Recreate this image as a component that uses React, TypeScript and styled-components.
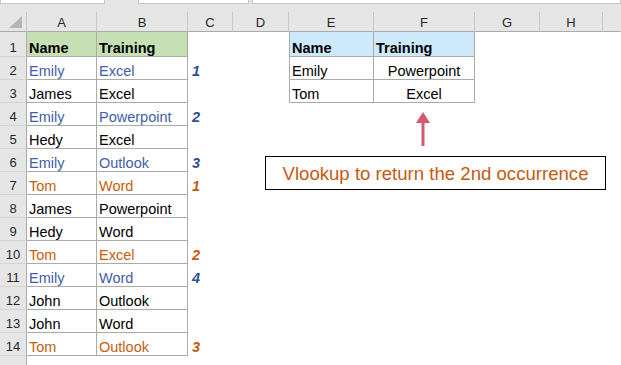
import React from 'react';
import styled, { createGlobalStyle } from 'styled-components';

const Global = createGlobalStyle`
  html, body { margin: 0; padding: 0; background: #fff; }
  body { font-family: "Liberation Sans", Arial, sans-serif; }
`;

const Sheet = styled.div`
  position: relative;
  width: 621px;
  height: 365px;
  overflow: hidden;
  background: #fff;
`;

const FormulaStrip = styled.div`
  display: flex;
  align-items: flex-start;
  height: 12px;
  background: #e6e6e6;
`;

const StripBox = styled.div<{ $w: number; $ml: number }>`
  box-sizing: border-box;
  width: ${(p) => p.$w}px;
  margin-left: ${(p) => p.$ml}px;
  height: 4px;
  background: #fff;
  border: 1px solid #c6c6c6;
  border-top: none;
`;

const COLS = [27, 70, 91, 45, 56, 85, 101, 65, 63, 18];

const Grid = styled.div`
  display: grid;
  grid-template-columns: ${COLS.map((c) => `${c}px`).join(' ')};
  grid-template-rows: 20px 25px repeat(14, 23px);
`;

const Corner = styled.div`
  box-sizing: border-box;
  background: #e6e6e6;
  border-right: 1px solid #c8c8c8;
  border-bottom: 1px solid #ababab;
  display: flex;
  align-items: flex-end;
  justify-content: flex-end;
  padding: 0 4px 3px 0;
`;

const ColHead = styled.div<{ $last?: boolean }>`
  box-sizing: border-box;
  background: #e6e6e6;
  border-right: 1px solid ${(p) => (p.$last ? 'transparent' : '#c8c8c8')};
  border-bottom: 1px solid #ababab;
  display: flex;
  align-items: center;
  justify-content: center;
  font-size: 13px;
  color: #262626;
  padding-top: 1px;
`;

const RowHead = styled.div`
  box-sizing: border-box;
  background: #e6e6e6;
  border-right: 1px solid #ababab;
  border-bottom: 1px solid #d4d4d4;
  display: flex;
  align-items: flex-end;
  justify-content: center;
  font-size: 13px;
  line-height: 16px;
  color: #262626;
`;

type Tone = 'black' | 'blue' | 'orange' | 'numBlue' | 'numOrange';

const toneColor: Record<Tone, string> = {
  black: '#000000',
  blue: '#4260a8',
  orange: '#c8600f',
  numBlue: '#2f4f96',
  numOrange: '#c55a11',
};

const Cell = styled.div<{
  $fill?: string;
  $tone: Tone;
  $bold?: boolean;
  $center?: boolean;
  $boxed?: boolean;
  $leftEdge?: boolean;
}>`
  box-sizing: border-box;
  display: flex;
  align-items: flex-end;
  justify-content: ${(p) => (p.$center ? 'center' : 'flex-start')};
  padding: 0 ${(p) => (p.$tone === 'numBlue' || p.$tone === 'numOrange' ? '4px' : '2px')};
  background: ${(p) => p.$fill || '#fff'};
  border-right: 1px solid ${(p) => (p.$boxed ? '#ababab' : 'transparent')};
  border-bottom: 1px solid ${(p) => (p.$boxed ? '#ababab' : 'transparent')};
  border-left: ${(p) => (p.$leftEdge ? '1px solid #ababab' : 'none')};
  white-space: nowrap;
  font-size: 14.5px;
  line-height: 16px;
  color: ${(p) => toneColor[p.$tone]};
  font-weight: ${(p) => (p.$bold || p.$tone === 'numBlue' || p.$tone === 'numOrange' ? 700 : 400)};
  font-style: ${(p) => (p.$tone === 'numBlue' || p.$tone === 'numOrange' ? 'italic' : 'normal')};
`;

const ArrowMark = styled.svg`
  position: absolute;
  left: 414px;
  top: 111px;
`;

const Callout = styled.div`
  position: absolute;
  left: 265px;
  top: 156px;
  box-sizing: border-box;
  width: 341px;
  height: 34px;
  border: 1px solid #000;
  background: #fff;
  display: flex;
  align-items: center;
  justify-content: center;
  font-size: 18.6px;
  color: #c55a11;
  padding-top: 1px;
`;

type Spec = {
  text?: string;
  tone?: Tone;
  bold?: boolean;
  center?: boolean;
  fill?: string;
  boxed?: boolean;
  leftEdge?: boolean;
};

const GREEN = '#c6e0b4';
const LIGHTBLUE = '#cde9fb';

const leftData: Array<[string, string, Tone, string?, Tone?]> = [
  ['Emily', 'Excel', 'blue', '1', 'numBlue'],
  ['James', 'Excel', 'black'],
  ['Emily', 'Powerpoint', 'blue', '2', 'numBlue'],
  ['Hedy', 'Excel', 'black'],
  ['Emily', 'Outlook', 'blue', '3', 'numBlue'],
  ['Tom', 'Word', 'orange', '1', 'numOrange'],
  ['James', 'Powerpoint', 'black'],
  ['Hedy', 'Word', 'black'],
  ['Tom', 'Excel', 'orange', '2', 'numOrange'],
  ['Emily', 'Word', 'blue', '4', 'numBlue'],
  ['John', 'Outlook', 'black'],
  ['John', 'Word', 'black'],
  ['Tom', 'Outlook', 'orange', '3', 'numOrange'],
];

const rightData: Array<[string, string]> = [
  ['Emily', 'Powerpoint'],
  ['Tom', 'Excel'],
];

function buildRow(r: number): Spec[] {
  const row: Spec[] = Array.from({ length: 9 }, () => ({}));
  if (r === 1) {
    row[0] = { text: 'Name', bold: true, fill: GREEN, boxed: true };
    row[1] = { text: 'Training', bold: true, fill: GREEN, boxed: true };
    row[4] = { text: 'Name', bold: true, fill: LIGHTBLUE, boxed: true, leftEdge: true };
    row[5] = { text: 'Training', bold: true, fill: LIGHTBLUE, boxed: true };
  } else if (r <= 14) {
    const [name, training, tone, num, numTone] = leftData[r - 2];
    row[0] = { text: name, tone, boxed: true };
    row[1] = { text: training, tone, boxed: true };
    if (num) row[2] = { text: num, tone: numTone };
    if (r <= 3) {
      const [n, t] = rightData[r - 2];
      row[4] = { text: n, boxed: true, leftEdge: true };
      row[5] = { text: t, boxed: true, center: true };
    }
  }
  return row;
}

const letters = ['A', 'B', 'C', 'D', 'E', 'F', 'G', 'H', ''];

export default function App() {
  const rows = Array.from({ length: 15 }, (_, i) => i + 1);
  return (
    <>
      <Global />
      <Sheet>
        <FormulaStrip>
          <StripBox $w={105} $ml={0} />
          <StripBox $w={111} $ml={33} />
          <StripBox $w={370} $ml={3} />
        </FormulaStrip>
        <Grid>
          <Corner>
            <svg width="13" height="12" viewBox="0 0 13 12">
              <polygon points="13,0 13,12 0,12" fill="#b4b4b4" />
            </svg>
          </Corner>
          {letters.map((l, i) => (
            <ColHead key={`h${i}`} $last={i === letters.length - 1}>
              {l}
            </ColHead>
          ))}
          {rows.map((r) => (
            <React.Fragment key={r}>
              <RowHead>{r}</RowHead>
              {buildRow(r).map((c, ci) => (
                <Cell
                  key={ci}
                  $fill={c.fill}
                  $tone={c.tone || 'black'}
                  $bold={c.bold}
                  $center={c.center}
                  $boxed={c.boxed}
                  $leftEdge={c.leftEdge}
                >
                  {c.text}
                </Cell>
              ))}
            </React.Fragment>
          ))}
        </Grid>
        <ArrowMark width="18" height="36" viewBox="0 0 18 36">
          <rect x="7.5" y="10" width="3" height="25" fill="#d25a6c" />
          <polygon points="9,1 16,12 2,12" fill="#d25a6c" />
        </ArrowMark>
        <Callout>Vlookup to return the 2nd occurrence</Callout>
      </Sheet>
    </>
  );
}
